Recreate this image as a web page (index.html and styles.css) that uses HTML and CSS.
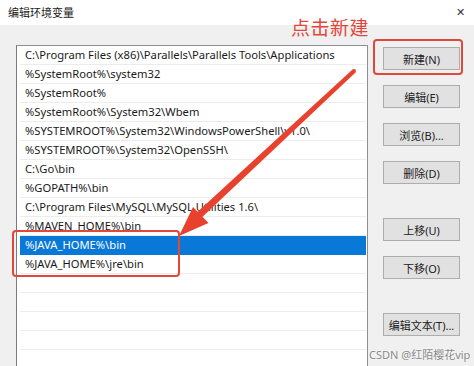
FILE: index.html
```html
<!DOCTYPE html>
<html lang="zh-CN">
<head>
  <meta charset="UTF-8">
  <title>编辑环境变量</title>
  <link rel="stylesheet" href="styles.css">
</head>
<body>
  <div class="window">
    <div class="titlebar">
      <span class="title">编辑环境变量</span>
      <span class="close">✕</span>
    </div>

    <div class="dialog-body">
      <!-- path list -->
      <div class="path-list">
        <div class="row">C:\Program Files (x86)\Parallels\Parallels Tools\Applications</div>
        <div class="row">%SystemRoot%\system32</div>
        <div class="row">%SystemRoot%</div>
        <div class="row">%SystemRoot%\System32\Wbem</div>
        <div class="row">%SYSTEMROOT%\System32\WindowsPowerShell\v1.0\</div>
        <div class="row">%SYSTEMROOT%\System32\OpenSSH\</div>
        <div class="row">C:\Go\bin</div>
        <div class="row">%GOPATH%\bin</div>
        <div class="row">C:\Program Files\MySQL\MySQL Utilities 1.6\</div>
        <div class="row">%MAVEN_HOME%\bin</div>
        <div class="row selected">%JAVA_HOME%\bin</div>
        <div class="row">%JAVA_HOME%\jre\bin</div>
        <div class="row"></div>
        <div class="row"></div>
        <div class="row"></div>
        <div class="row"></div>
        <div class="row"></div>
      </div>

      <!-- buttons -->
      <div class="actions">
        <button class="btn">新建(N)</button>
        <button class="btn">编辑(E)</button>
        <button class="btn">浏览(B)...</button>
        <button class="btn">删除(D)</button>
        <button class="btn spaced">上移(U)</button>
        <button class="btn">下移(O)</button>
        <button class="btn spaced">编辑文本(T)...</button>
      </div>
    </div>

    <!-- annotations drawn over the screenshot -->
    <div class="note">点击新建</div>
    <div class="mark mark-new"></div>
    <div class="mark mark-java"></div>
    <svg class="arrow" width="474" height="366" viewBox="0 0 474 366">
      <polygon points="352.5,69.5 355.5,72.5 198,221 193,216" fill="#e8422e"/>
      <circle cx="354" cy="71" r="2" fill="#e8422e"/>
      <polygon points="179,236 193,207 208.5,223" fill="#e8422e"/>
    </svg>
    <div class="watermark">CSDN @红陌樱花vip</div>
  </div>
</body>
</html>
```

FILE: styles.css
```css
* {
  margin: 0;
  padding: 0;
  box-sizing: border-box;
}

body {
  width: 474px;
  height: 366px;
  overflow: hidden;
  font-family: 'Noto Sans', 'Noto Sans CJK SC', sans-serif;
  color: #000;
  background-color: #f0f0f0;
}

.window {
  position: relative;
  width: 474px;
  height: 366px;
  display: flex;
  flex-direction: column;
  overflow: hidden;
}

.titlebar {
  height: 25px;
  flex-shrink: 0;
  background-color: #fff;
  display: flex;
  justify-content: space-between;
  align-items: center;
  padding: 0 9px 2px 8px;
}

.title {
  font-size: 11px;
  font-family: 'Noto Sans CJK SC', sans-serif;
  color: #222;
}

.close {
  font-size: 11px;
  color: #333;
}

.dialog-body {
  flex: 1;
  min-height: 0;
  display: flex;
  padding: 20px 0 0 16px;
  background-color: #f0f0f0;
  overflow: hidden;
}

.path-list {
  width: 352px;
  background-color: #fff;
  border: 1px solid #8e8f94;
  border-left-color: #7a7a7a;
  border-bottom: none;
  padding: 0 1px 0 3px;
  overflow: hidden;
}

.row {
  height: 19px;
  line-height: 18px;
  padding-left: 5px;
  font-size: 11.2px;
  color: #1a1a1a;
  border-bottom: 1px solid #ececec;
  white-space: nowrap;
  overflow: hidden;
}

.row.selected {
  background-color: #0a78d6;
  color: #fff;
  border-bottom-color: #0a78d6;
}

.actions {
  display: flex;
  flex-direction: column;
  gap: 15px;
  padding: 2px 0 0 15px;
}

.btn {
  width: 77px;
  height: 23px;
  flex-shrink: 0;
  background-color: #e1e1e1;
  border: 1px solid #adadad;
  font-family: 'Noto Sans', 'Noto Sans CJK SC', sans-serif;
  font-size: 11px;
  color: #222;
}

.btn.spaced {
  margin-top: 19px;
}

/* red annotations */
.note {
  position: absolute;
  left: 291px;
  top: 13px;
  font-family: 'Noto Sans CJK SC', sans-serif;
  font-size: 19px;
  color: #e3473b;
  letter-spacing: 0.5px;
}

.mark {
  position: absolute;
  border: 2px solid #e0483c;
  border-radius: 4px;
}

.mark-new {
  left: 373px;
  top: 39px;
  width: 90px;
  height: 36px;
}

.mark-java {
  left: 12px;
  top: 230px;
  width: 168px;
  height: 47px;
}

.arrow {
  position: absolute;
  left: 0;
  top: 0;
}

.watermark {
  position: absolute;
  left: 369px;
  top: 346px;
  white-space: nowrap;
  font-family: 'Noto Sans', 'Noto Sans CJK SC', sans-serif;
  font-size: 11px;
  color: #8a8a8a;
  text-shadow: 0 0 2px #fff;
}
```
